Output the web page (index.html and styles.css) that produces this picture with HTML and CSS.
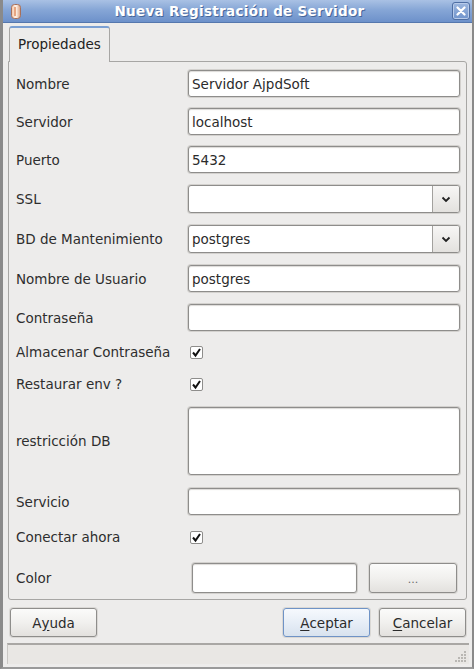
FILE: index.html
```html
<!DOCTYPE html>
<html lang="es">
<head>
<meta charset="utf-8">
<title>Nueva Registración de Servidor</title>
<link rel="stylesheet" href="styles.css">
</head>
<body>
<div class="window">
  <div class="titlebar">
    <svg class="appicon" width="10" height="15" viewBox="0 0 10 15">
      <defs>
        <linearGradient id="ig" x1="0" y1="0" x2="1" y2="0">
          <stop offset="0" stop-color="#f2c3a4"/>
          <stop offset="0.5" stop-color="#fff4ea"/>
          <stop offset="1" stop-color="#d99a78"/>
        </linearGradient>
      </defs>
      <rect x="0.5" y="0.5" width="9" height="14" rx="3" fill="url(#ig)" stroke="#a8705a" stroke-width="1"/>
      <rect x="3" y="3" width="2" height="9" fill="#e7a682"/>
    </svg>
    <div class="title">Nueva Registración de Servidor</div>
    <div class="closebtn">
      <svg width="10" height="10" viewBox="0 0 10 10"><path d="M1.5 1.5 L8.5 8.5 M8.5 1.5 L1.5 8.5" stroke="#ffffff" stroke-width="2.2" stroke-linecap="round"/></svg>
    </div>
  </div>

  <div class="body">
    <div class="tabs">
      <div class="tab">Propiedades</div>
    </div>
    <div class="panel">
      <div class="row r1"><div class="label">Nombre</div><div class="field"><div class="entry">Servidor AjpdSoft</div></div></div>
      <div class="row r2"><div class="label">Servidor</div><div class="field"><div class="entry">localhost</div></div></div>
      <div class="row r3"><div class="label">Puerto</div><div class="field"><div class="entry">5432</div></div></div>
      <div class="row r4"><div class="label">SSL</div><div class="field"><div class="combo"><div class="combo-text"></div><div class="combo-btn"><svg width="10" height="7" viewBox="0 0 10 7"><path d="M1.5 1.5 L5 5 L8.5 1.5" fill="none" stroke="#222" stroke-width="1.8"/></svg></div></div></div></div>
      <div class="row r5"><div class="label">BD de Mantenimiento</div><div class="field"><div class="combo"><div class="combo-text">postgres</div><div class="combo-btn"><svg width="10" height="7" viewBox="0 0 10 7"><path d="M1.5 1.5 L5 5 L8.5 1.5" fill="none" stroke="#222" stroke-width="1.8"/></svg></div></div></div></div>
      <div class="row r6"><div class="label">Nombre de Usuario</div><div class="field"><div class="entry">postgres</div></div></div>
      <div class="row r7"><div class="label">Contraseña</div><div class="field"><div class="entry"></div></div></div>
      <div class="row r8"><div class="label">Almacenar Contraseña</div><div class="field"><div class="check"><svg width="11" height="11" viewBox="0 0 11 11"><path d="M2 5.5 L4.5 8.5 L9 2" fill="none" stroke="#111" stroke-width="2"/></svg></div></div></div>
      <div class="row r9"><div class="label">Restaurar env ?</div><div class="field"><div class="check"><svg width="11" height="11" viewBox="0 0 11 11"><path d="M2 5.5 L4.5 8.5 L9 2" fill="none" stroke="#111" stroke-width="2"/></svg></div></div></div>
      <div class="row r10"><div class="label">restricción DB</div><div class="field"><div class="entry textarea"></div></div></div>
      <div class="row r11"><div class="label">Servicio</div><div class="field"><div class="entry"></div></div></div>
      <div class="row r12"><div class="label">Conectar ahora</div><div class="field"><div class="check"><svg width="11" height="11" viewBox="0 0 11 11"><path d="M2 5.5 L4.5 8.5 L9 2" fill="none" stroke="#111" stroke-width="2"/></svg></div></div></div>
      <div class="row r13"><div class="label">Color</div><div class="field colorfield"><div class="entry color-entry"></div><div class="btn dots">...</div></div></div>
    </div>

    <div class="buttons">
      <div class="btn action">A<u>y</u>uda</div>
      <div class="spacer"></div>
      <div class="btn action default"><u>A</u>ceptar</div>
      <div class="btn action"><u>C</u>ancelar</div>
    </div>

    <div class="statusbar">
      <svg class="grip" width="12" height="12" viewBox="0 0 12 12">
        <g fill="#b9b7b3">
          <rect x="9" y="1" width="2" height="2"/>
          <rect x="6" y="4" width="2" height="2"/><rect x="9" y="4" width="2" height="2"/>
          <rect x="3" y="7" width="2" height="2"/><rect x="6" y="7" width="2" height="2"/><rect x="9" y="7" width="2" height="2"/>
          <rect x="0" y="10" width="2" height="2"/><rect x="3" y="10" width="2" height="2"/><rect x="6" y="10" width="2" height="2"/><rect x="9" y="10" width="2" height="2"/>
        </g>
      </svg>
    </div>
  </div>
</div>
</body>
</html>
```

FILE: styles.css
```css
* { box-sizing: border-box; }

html, body {
  margin: 0;
  padding: 0;
}

body {
  width: 474px;
  height: 669px;
  overflow: hidden;
  background: #8d8d8d;
  font-family: "DejaVu Sans", "Liberation Sans", sans-serif;
  font-size: 13.5px;
  color: #2e2e2e;
}

.window {
  width: 474px;
  height: 669px;
  display: flex;
  flex-direction: column;
  border-left: 3px solid #8a8a8a;
  border-right: 2px solid #8a8a8a;
  border-bottom: 2px solid #9a9a9a;
  background: #edeceb;
}

.titlebar {
  height: 23px;
  flex: none;
  display: flex;
  align-items: center;
  padding: 0 2px 0 8px;
  background: linear-gradient(to bottom, #a9c1e4 0%, #86a6d6 45%, #6d91ca 100%);
  border-bottom: 1px solid #5577ad;
}

.appicon {
  flex: none;
  margin-top: 1px;
}

.title {
  flex: 1;
  text-align: center;
  color: #ffffff;
  font-weight: bold;
  font-size: 13.5px;
  letter-spacing: 0.3px;
  text-shadow: 1px 1px 0 #47679b;
  padding-left: 6px;
}

.closebtn {
  flex: none;
  width: 18px;
  height: 18px;
  border: 1px solid #4e6ea3;
  border-radius: 3px;
  background: linear-gradient(to bottom, #9cb6de, #7094cc);
  box-shadow: inset 0 0 0 1px #b8cbe9;
  display: flex;
  align-items: center;
  justify-content: center;
}

.body {
  flex: 1;
  display: flex;
  flex-direction: column;
  padding: 3px 5px 2px 5px;
}

.tabs {
  display: flex;
  padding-left: 1px;
  position: relative;
  z-index: 1;
  margin-bottom: -1px;
}

.tab {
  width: 101px;
  height: 36px;
  border: 1px solid #a7a6a4;
  border-top: 2px solid #7ba0d3;
  border-bottom: none;
  border-radius: 3px 3px 0 0;
  background: #edeceb;
  padding: 8px 0 0 8px;
  color: #222;
}

.panel {
  border: 1px solid #a7a6a4;
  border-radius: 0 3px 3px 3px;
  padding: 8px 6px 6px 7px;
  display: flex;
  flex-direction: column;
}

.row {
  display: flex;
  align-items: center;
}

.label {
  width: 172px;
  flex: none;
  color: #2e2e2e;
}

.field {
  flex: 1;
  display: flex;
  align-items: center;
  height: 100%;
}

.r1 { height: 27px; }
.r2 { height: 27px; margin-top: 11px; }
.r3 { height: 27px; margin-top: 11px; }
.r4 { height: 28px; margin-top: 12px; }
.r5 { height: 28px; margin-top: 12px; }
.r6 { height: 27px; margin-top: 12px; }
.r7 { height: 27px; margin-top: 12px; }
.r8 { height: 20px; margin-top: 11px; }
.r9 { height: 20px; margin-top: 12px; }
.r10 { height: 68px; margin-top: 13px; }
.r11 { height: 27px; margin-top: 13px; }
.r12 { height: 20px; margin-top: 12px; }
.r13 { height: 30px; margin-top: 16px; }

.entry {
  width: 100%;
  height: 100%;
  background: #ffffff;
  border: 1px solid #8e8d8b;
  border-radius: 3px;
  box-shadow: 0 0 0 1px #d3d1ce, inset 0 1px 1px #dcdad7;
  padding: 0 3px;
  display: flex;
  align-items: center;
  color: #2b2b2b;
}

.textarea {
  align-items: flex-start;
}

.combo {
  width: 100%;
  height: 100%;
  display: flex;
  background: #ffffff;
  border: 1px solid #8e8d8b;
  border-radius: 3px;
  box-shadow: 0 0 0 1px #d3d1ce;
  overflow: hidden;
}

.combo-text {
  flex: 1;
  padding: 0 3px;
  display: flex;
  align-items: center;
  color: #2b2b2b;
}

.combo-btn {
  width: 27px;
  flex: none;
  border-left: 1px solid #a3a19e;
  background: linear-gradient(to bottom, #f7f6f5, #e3e1de);
  display: flex;
  align-items: center;
  justify-content: center;
}

.check {
  width: 13px;
  height: 13px;
  margin-left: 2px;
  border: 1px solid #8e8d8b;
  border-radius: 2px;
  background: #ffffff;
  display: flex;
  align-items: center;
  justify-content: center;
}

.colorfield {
  padding-left: 4px;
  gap: 12px;
}

.color-entry {
  width: 165px;
  flex: none;
}

.btn {
  border: 1px solid #8e8d8b;
  border-radius: 3px;
  background: linear-gradient(to bottom, #fbfbfa 0%, #f1f0ee 50%, #e3e1de 100%);
  box-shadow: 0 0 0 1px #dad8d5;
  display: flex;
  align-items: center;
  justify-content: center;
  color: #2b2b2b;
}

.dots {
  width: 88px;
  height: 100%;
  flex: none;
  color: #6b6b6b;
  font-size: 11px;
  padding-top: 2px;
}

.buttons {
  display: flex;
  margin-top: 8px;
  height: 29px;
  padding: 0 1px 0 2px;
  gap: 9px;
}

.spacer { flex: 1; }

.action {
  width: 87px;
  height: 29px;
  font-size: 13.5px;
}

.action u {
  text-underline-offset: 2px;
}

.default {
  border-color: #6f93c6;
  background: linear-gradient(to bottom, #f6f9fd 0%, #e7eef7 50%, #d8e2ee 100%);
}

.statusbar {
  margin-top: 6px;
  height: 21px;
  margin-left: -1px;
  margin-right: -2px;
  border-top: 2px solid #a9a7a4;
  border-left: 1px solid #c9c7c4;
  background: #e9e7e4;
  display: flex;
  justify-content: flex-end;
  align-items: flex-end;
  padding: 0 2px 2px 0;
}

.grip { flex: none; }
```
